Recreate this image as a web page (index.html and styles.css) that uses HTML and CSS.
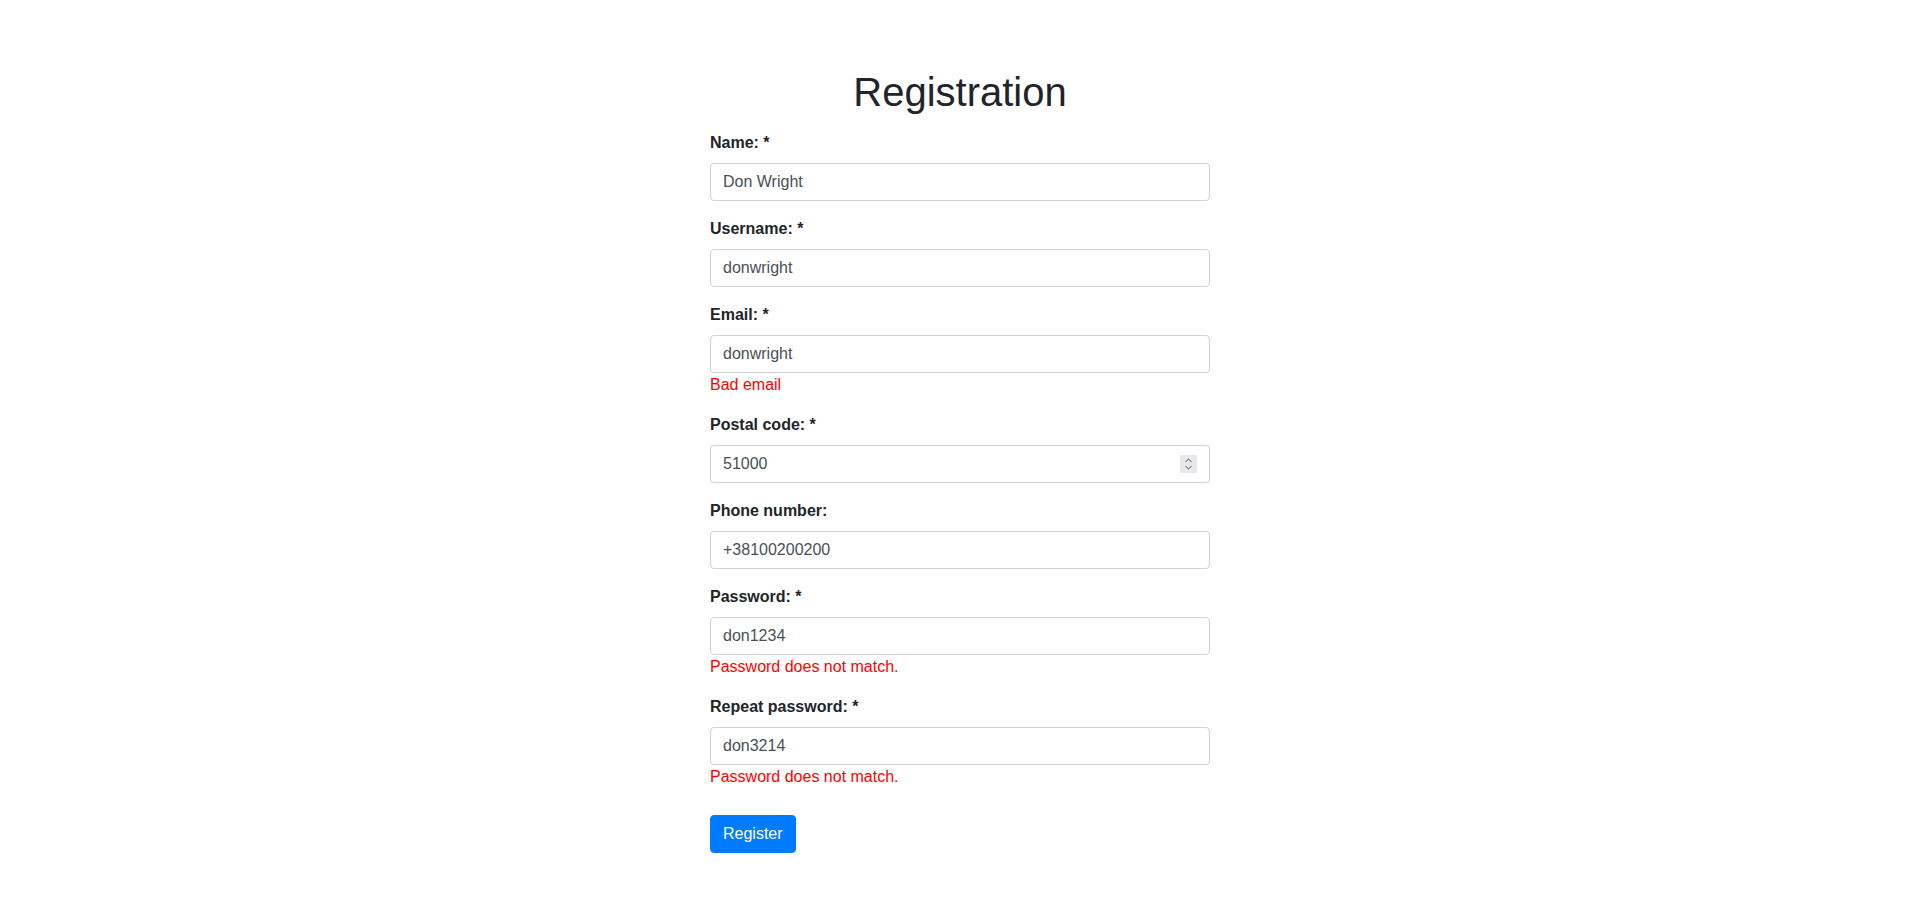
FILE: index.html
```html
<!DOCTYPE html>
<html lang="en">
<head>
<meta charset="utf-8">
<title>Registration</title>
<link rel="stylesheet" href="styles.css">
</head>
<body>
<main class="container">
  <h1 class="title">Registration</h1>
  <form class="form">
    <div class="form-group">
      <label class="label" for="name">Name: *</label>
      <input class="form-control" id="name" type="text" value="Don Wright">
    </div>
    <div class="form-group">
      <label class="label" for="username">Username: *</label>
      <input class="form-control" id="username" type="text" value="donwright">
    </div>
    <div class="form-group">
      <label class="label" for="email">Email: *</label>
      <input class="form-control" id="email" type="text" value="donwright">
      <div class="error">Bad email</div>
    </div>
    <div class="form-group">
      <label class="label" for="postal">Postal code: *</label>
      <div class="number-wrap">
        <input class="form-control number" id="postal" type="number" value="51000">
        <span class="spinner" aria-hidden="true">
          <svg width="17" height="18" viewBox="0 0 17 18">
            <rect width="17" height="18" fill="#e9e9ed"/>
            <path d="M5.5 7 L8.5 4 L11.5 7" fill="none" stroke="#8c8c93" stroke-width="1.2"/>
            <path d="M5.5 11 L8.5 14 L11.5 11" fill="none" stroke="#8c8c93" stroke-width="1.2"/>
          </svg>
        </span>
      </div>
    </div>
    <div class="form-group">
      <label class="label" for="phone">Phone number:</label>
      <input class="form-control" id="phone" type="text" value="+38100200200">
    </div>
    <div class="form-group">
      <label class="label" for="password">Password: *</label>
      <input class="form-control" id="password" type="text" value="don1234">
      <div class="error">Password does not match.</div>
    </div>
    <div class="form-group">
      <label class="label" for="repeat">Repeat password: *</label>
      <input class="form-control" id="repeat" type="text" value="don3214">
      <div class="error">Password does not match.</div>
    </div>
    <button class="btn" type="button">Register</button>
  </form>
</main>
</body>
</html>
```

FILE: styles.css
```css
html, body {
  margin: 0;
  padding: 0;
  background: #fff;
}

body {
  font-family: "Liberation Sans", Arial, Helvetica, sans-serif;
  font-size: 16px;
  line-height: 1.5;
  color: #212529;
}

.container {
  width: 500px;
  margin: 0 auto;
  padding-top: 68px;
}

.title {
  margin: 0 0 15px;
  font-size: 40px;
  font-weight: 400;
  line-height: 1.2;
  text-align: center;
  color: #212529;
}

.form {
  display: flex;
  flex-direction: column;
  margin: 0;
}

.form-group {
  display: flex;
  flex-direction: column;
  margin-bottom: 16px;
}

.label {
  font-weight: 700;
  margin-bottom: 8px;
  line-height: 24px;
}

.form-control {
  box-sizing: border-box;
  display: block;
  width: 100%;
  height: 38px;
  padding: 6px 12px;
  margin: 0;
  font-family: inherit;
  font-size: 16px;
  line-height: 24px;
  color: #495057;
  background: #fff;
  border: 1px solid #ced4da;
  border-radius: 4px;
  outline: none;
}

.number {
  -moz-appearance: textfield;
  appearance: textfield;
}

.number::-webkit-inner-spin-button,
.number::-webkit-outer-spin-button {
  -webkit-appearance: none;
  margin: 0;
}

.number-wrap {
  position: relative;
}

.spinner {
  position: absolute;
  right: 13px;
  top: 10px;
  width: 17px;
  height: 18px;
  display: block;
}

.spinner svg {
  display: block;
}

.error {
  color: #ff0000;
  line-height: 24px;
}

.btn {
  align-self: flex-start;
  box-sizing: border-box;
  margin-top: 10px;
  height: 38px;
  padding: 6px 12px;
  font-family: inherit;
  font-size: 16px;
  line-height: 24px;
  color: #fff;
  background: #007bff;
  border: 1px solid #007bff;
  border-radius: 4px;
  cursor: pointer;
}
```
